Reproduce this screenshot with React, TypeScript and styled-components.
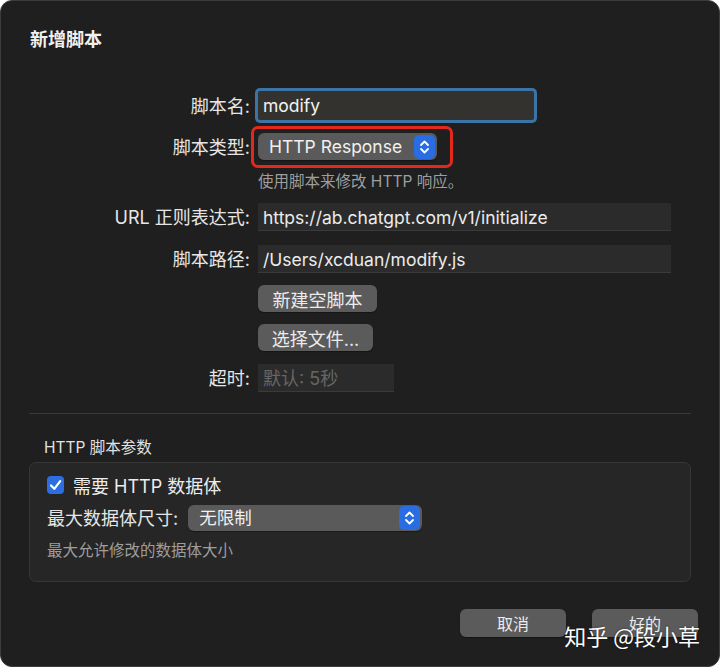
import styled, { createGlobalStyle } from "styled-components";

const GlobalStyle = createGlobalStyle`
  html, body {
    margin: 0;
    padding: 0;
    background: #ffffff;
  }
  * {
    box-sizing: border-box;
  }
`;

const Window = styled.div`
  position: relative;
  width: 720px;
  height: 667px;
  background: #1f1f1f;
  border-radius: 12px;
  border: 1px solid #3c3c3c;
  overflow: hidden;
  font-family: Inter, "Noto Sans CJK SC", sans-serif;
  color: #e8e8e8;
  display: flex;
  flex-direction: column;
`;

const Title = styled.h1`
  margin: 27px 0 0 29px;
  font-size: 18px;
  line-height: 24px;
  font-weight: 700;
  color: #f0f0f0;
`;

const Row = styled.div<{ $gap: number }>`
  display: grid;
  grid-template-columns: 249px 1fr;
  column-gap: 8px;
  align-items: center;
  margin-top: ${(p) => p.$gap}px;
`;

const Label = styled.span`
  text-align: right;
  font-size: 18px;
  line-height: 22px;
  padding-top: 2px;
  color: #e6e6e6;
  white-space: nowrap;
`;

const FocusInput = styled.div`
  width: 276px;
  height: 29px;
  background: #34322f;
  box-shadow: 0 0 0 3px #3b74a6;
  border-radius: 2px;
  padding-left: 5px;
  font-size: 17.5px;
  line-height: 30px;
  color: #f2f2f2;
`;

const TextField = styled.div<{ $width: number; $placeholder?: boolean }>`
  width: ${(p) => p.$width}px;
  height: 28px;
  background: #2b2b2b;
  border-bottom: 1px solid #3a3a3a;
  padding-left: 5px;
  font-size: ${(p) => (p.$placeholder ? 18 : 17.5)}px;
  line-height: 29px;
  color: ${(p) => (p.$placeholder ? "#666666" : "#ececec")};
  white-space: nowrap;
`;

const PopupWrap = styled.div`
  position: relative;
  justify-self: start;
`;

const Popup = styled.div<{ $width: number; $height: number }>`
  position: relative;
  width: ${(p) => p.$width}px;
  height: ${(p) => p.$height}px;
  background: #5a5a5a;
  border-radius: 6px;
  padding-left: 11px;
  font-size: 17.5px;
  line-height: ${(p) => p.$height}px;
  color: #f0f0f0;
  box-shadow: 0 1px 1px rgba(0, 0, 0, 0.35);
  white-space: nowrap;
`;

const Stepper = styled.span`
  position: absolute;
  right: 2px;
  top: 50%;
  transform: translateY(-50%);
  width: 21px;
  height: 24px;
  border-radius: 5px;
  background: #2a6ce2;
  display: flex;
  align-items: center;
  justify-content: center;
`;

const Highlight = styled.span`
  position: absolute;
  left: -7px;
  top: -7px;
  right: -16px;
  bottom: -8px;
  border: 3px solid #e2291c;
  border-radius: 7px;
  pointer-events: none;
`;

const Hint = styled.span`
  font-size: 15.5px;
  line-height: 20px;
  color: #9e9e9e;
  white-space: nowrap;
`;

const PushButton = styled.button<{ $width: number; $height?: number; $size?: number }>`
  justify-self: start;
  width: ${(p) => p.$width}px;
  height: ${(p) => p.$height ?? 27}px;
  border: none;
  border-radius: 6px;
  background: #5b5b5b;
  color: #ececec;
  font-family: inherit;
  font-size: ${(p) => p.$size ?? 18}px;
  padding: 0;
  box-shadow: 0 1px 1px rgba(0, 0, 0, 0.35);
`;

const Separator = styled.hr`
  margin: 21px 28px 0;
  border: none;
  height: 1px;
  background: #3a3a3a;
`;

const SectionTitle = styled.div`
  margin: 24px 0 0 43px;
  font-size: 15.5px;
  line-height: 20px;
  color: #e2e2e2;
`;

const GroupBox = styled.div`
  margin: 4px 28px 0;
  height: 120px;
  background: #262626;
  border: 1px solid #363636;
  border-radius: 7px;
  padding: 12px 16px 0 17px;
  display: flex;
  flex-direction: column;
`;

const CheckRow = styled.label`
  display: flex;
  align-items: center;
  gap: 9px;
  height: 20px;
  font-size: 18px;
  color: #ececec;
`;

const CheckBox = styled.span`
  width: 17px;
  height: 18px;
  border-radius: 4px;
  background: #2c6de0;
  display: flex;
  align-items: center;
  justify-content: center;
`;

const InlineRow = styled.div<{ $gap: number }>`
  display: flex;
  align-items: center;
  gap: 10px;
  margin-top: ${(p) => p.$gap}px;
`;

const Footer = styled.div`
  margin: 27px 21px 0 0;
  display: flex;
  justify-content: flex-end;
  gap: 26px;
`;

const Watermark = styled.span`
  position: absolute;
  right: 19px;
  bottom: 17px;
  font-family: "Noto Sans CJK SC", sans-serif;
  font-size: 22px;
  line-height: 28px;
  color: #ffffff;
  text-shadow: 0 0 2px rgba(0, 0, 0, 0.6);
  white-space: nowrap;
`;

function Chevrons() {
  return (
    <svg width="21" height="24" viewBox="0 0 21 24" fill="none">
      <path d="M7 10 L10.5 6.5 L14 10" stroke="#fff" strokeWidth="1.8" strokeLinecap="round" strokeLinejoin="round" />
      <path d="M7 14 L10.5 17.5 L14 14" stroke="#fff" strokeWidth="1.8" strokeLinecap="round" strokeLinejoin="round" />
    </svg>
  );
}

function Check() {
  return (
    <svg width="17" height="18" viewBox="0 0 17 18" fill="none">
      <path d="M4 9.5 L7.3 12.8 L13.2 5.2" stroke="#fff" strokeWidth="2.2" strokeLinecap="round" strokeLinejoin="round" />
    </svg>
  );
}

export default function App() {
  return (
    <>
      <GlobalStyle />
      <Window>
        <Title>新增脚本</Title>

        <Row $gap={39}>
          <Label>脚本名:</Label>
          <FocusInput>modify</FocusInput>
        </Row>

        <Row $gap={13}>
          <Label>脚本类型:</Label>
          <PopupWrap>
            <Popup $width={179} $height={27}>
              HTTP Response
              <Stepper>
                <Chevrons />
              </Stepper>
            </Popup>
            <Highlight />
          </PopupWrap>
        </Row>

        <Row $gap={12}>
          <span />
          <Hint>使用脚本来修改 HTTP 响应。</Hint>
        </Row>

        <Row $gap={11}>
          <Label>URL 正则表达式:</Label>
          <TextField $width={413}>https://ab.chatgpt.com/v1/initialize</TextField>
        </Row>

        <Row $gap={14}>
          <Label>脚本路径:</Label>
          <TextField $width={413}>/Users/xcduan/modify.js</TextField>
        </Row>

        <Row $gap={12}>
          <span />
          <PushButton $width={119}>新建空脚本</PushButton>
        </Row>

        <Row $gap={12}>
          <span />
          <PushButton $width={115}>选择文件...</PushButton>
        </Row>

        <Row $gap={13}>
          <Label>超时:</Label>
          <TextField $width={136} $placeholder>
            默认: 5秒
          </TextField>
        </Row>

        <Separator />

        <SectionTitle>HTTP 脚本参数</SectionTitle>

        <GroupBox>
          <CheckRow>
            <CheckBox>
              <Check />
            </CheckBox>
            需要 HTTP 数据体
          </CheckRow>
          <InlineRow $gap={10}>
            <Label>最大数据体尺寸:</Label>
            <Popup $width={234} $height={26}>
              无限制
              <Stepper>
                <Chevrons />
              </Stepper>
            </Popup>
          </InlineRow>
          <InlineRow $gap={10}>
            <Hint>最大允许修改的数据体大小</Hint>
          </InlineRow>
        </GroupBox>

        <Footer>
          <PushButton $width={106} $height={28} $size={16}>取消</PushButton>
          <PushButton $width={106} $height={28} $size={16}>好的</PushButton>
        </Footer>

        <Watermark>知乎 @段小草</Watermark>
      </Window>
    </>
  );
}
